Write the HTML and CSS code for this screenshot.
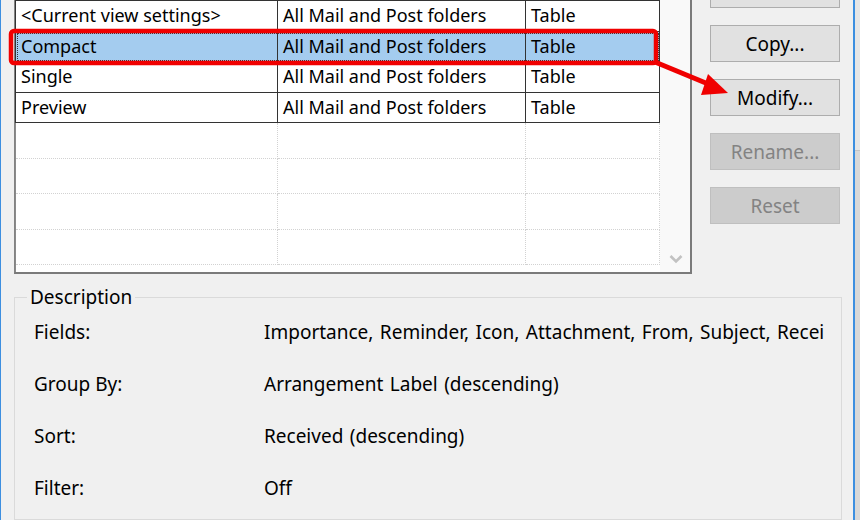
FILE: index.html
```html
<!DOCTYPE html>
<html>
<head>
<meta charset="utf-8">
<link rel="stylesheet" href="styles.css">
</head>
<body>
<div class="frame">
  <div class="edge-left"></div>
  <div class="content">
    <div class="top">
      <div class="listbox">
        <div class="grid">
          <div class="rows">
            <div class="row"><div class="cell">&lt;Current view settings&gt;</div><div class="cell">All Mail and Post folders</div><div class="cell">Table</div></div>
            <div class="row selected"><div class="cell">Compact</div><div class="cell">All Mail and Post folders</div><div class="cell">Table</div></div>
            <div class="row"><div class="cell">Single</div><div class="cell">All Mail and Post folders</div><div class="cell">Table</div></div>
            <div class="row"><div class="cell">Preview</div><div class="cell">All Mail and Post folders</div><div class="cell">Table</div></div>
          </div>
          <div class="empty">
            <div class="erow"><div class="ecell"></div><div class="ecell"></div><div class="ecell"></div></div>
            <div class="erow"><div class="ecell"></div><div class="ecell"></div><div class="ecell"></div></div>
            <div class="erow"><div class="ecell"></div><div class="ecell"></div><div class="ecell"></div></div>
            <div class="erow"><div class="ecell"></div><div class="ecell"></div><div class="ecell"></div></div>
          </div>
        </div>
        <div class="scrollbar">
          <svg class="chev" width="14" height="10" viewBox="0 0 14 10"><polyline points="1.5,2 7,7.5 12.5,2" fill="none" stroke="#c2c2c2" stroke-width="2.6"/></svg>
        </div>
      </div>
      <div class="buttons">
        <button class="btn" aria-label="New"></button>
        <button class="btn">Copy...</button>
        <button class="btn">Modify...</button>
        <button class="btn disabled">Rename...</button>
        <button class="btn disabled">Reset</button>
      </div>
    </div>
    <fieldset class="desc">
      <legend>Description</legend>
      <div class="fields">
        <div class="k">Fields:</div><div class="v">Importance, Reminder, Icon, Attachment, From, Subject, Recei</div>
        <div class="k">Group By:</div><div class="v">Arrangement Label (descending)</div>
        <div class="k">Sort:</div><div class="v">Received (descending)</div>
        <div class="k">Filter:</div><div class="v">Off</div>
      </div>
    </fieldset>
  </div>
  <div class="edge-right"></div>
  <div class="strip"><div class="strip-top"></div></div>
</div>
<svg class="annot" width="860" height="520" viewBox="0 0 860 520">
  <rect x="11" y="31" width="645" height="32" rx="3" fill="none" stroke="#f00000" stroke-width="4.5"/>
  <line x1="655" y1="62" x2="707" y2="83.5" stroke="#f00000" stroke-width="5"/>
  <polygon points="728,93 701,95 708,74" fill="#f00000"/>
</svg>
</body>
</html>
```
FILE: styles.css
```css
html, body {
  margin: 0;
  padding: 0;
}
body {
  width: 860px;
  height: 520px;
  overflow: hidden;
  position: relative;
  background: #f0f0f0;
  font-family: "Noto Sans", "Open Sans", sans-serif;
  font-size: 19px;
  color: #000;
}
.frame {
  display: flex;
  height: 520px;
}
.edge-left {
  width: 1px;
  flex: none;
  background: #3d8fe0;
}
.content {
  width: 852px;
  flex: none;
  display: flex;
  flex-direction: column;
  overflow: hidden;
}
.edge-right {
  width: 2px;
  flex: none;
  background: #3d8fe0;
}
.strip {
  width: 5px;
  flex: none;
  background: #d8d8d8;
}
.strip-top {
  height: 150px;
  background: #e6e6e6;
  border-bottom: 1px solid #c4c4c4;
}
.top {
  display: flex;
  align-items: flex-start;
  margin-top: -1px;
}
.listbox {
  margin-left: 13px;
  width: 678px;
  height: 275px;
  box-sizing: border-box;
  border: 1px solid #828282;
  border-right: 2px solid #7a7a7a;
  border-bottom: 2px solid #7a7a7a;
  background: #fff;
  display: flex;
  flex: none;
  font-size: 18px;
}
.grid {
  width: 645px;
  flex: none;
  display: flex;
  flex-direction: column;
}
.rows {
  border-left: 1px solid #333;
  border-top: 1px solid #333;
}
.row {
  display: grid;
  grid-template-columns: 262px 248px 134px;
  height: 30.5px;
}
.cell {
  box-sizing: border-box;
  border-right: 1px solid #333;
  border-bottom: 1px solid #333;
  padding-left: 5px;
  line-height: 29px;
  white-space: nowrap;
}
.row.selected {
  outline: 1px dotted #333;
  outline-offset: -2px;
}
.row.selected .cell {
  background: #a4ccef;
}
.empty {
  flex: 1;
  border-left: 1px solid #8a8a8a;
}
.erow {
  display: grid;
  grid-template-columns: 262px 248px 134px;
  height: 35.5px;
}
.ecell {
  box-sizing: border-box;
  border-right: 1px dotted #d2d2d2;
  border-bottom: 1px dotted #d2d2d2;
}
.scrollbar {
  flex: 1;
  background: #f9f9f9;
  display: flex;
  align-items: flex-end;
  justify-content: center;
  padding-bottom: 8px;
}
.chev {
  display: block;
  margin-left: 1px;
}
.buttons {
  margin-left: 18px;
  margin-top: -28px;
  width: 130px;
  display: flex;
  flex-direction: column;
  gap: 17px;
  flex: none;
}
.btn {
  height: 37px;
  box-sizing: border-box;
  border: 1px solid #adadad;
  background: #e1e1e1;
  font: inherit;
  color: #000;
  padding: 0;
  margin: 0;
}
.btn.disabled {
  background: #cccccc;
  border-color: #bfbfbf;
  color: #838383;
}
.desc {
  margin: 12px 0 0 13px;
  width: 828px;
  box-sizing: border-box;
  border: 1px solid #dadada;
  padding: 0 13px 0 12px;
  min-width: 0;
  flex: 1;
}
.desc legend {
  padding: 0 3px;
  line-height: 22px;
}
.fields {
  display: grid;
  grid-template-columns: 230px minmax(0, 1fr);
  row-gap: 30px;
  padding: 13px 0 0 7px;
  line-height: 22px;
}
.v {
  white-space: nowrap;
  word-spacing: 1.5px;
}
.annot {
  position: absolute;
  left: 0;
  top: 0;
  pointer-events: none;
}
```
